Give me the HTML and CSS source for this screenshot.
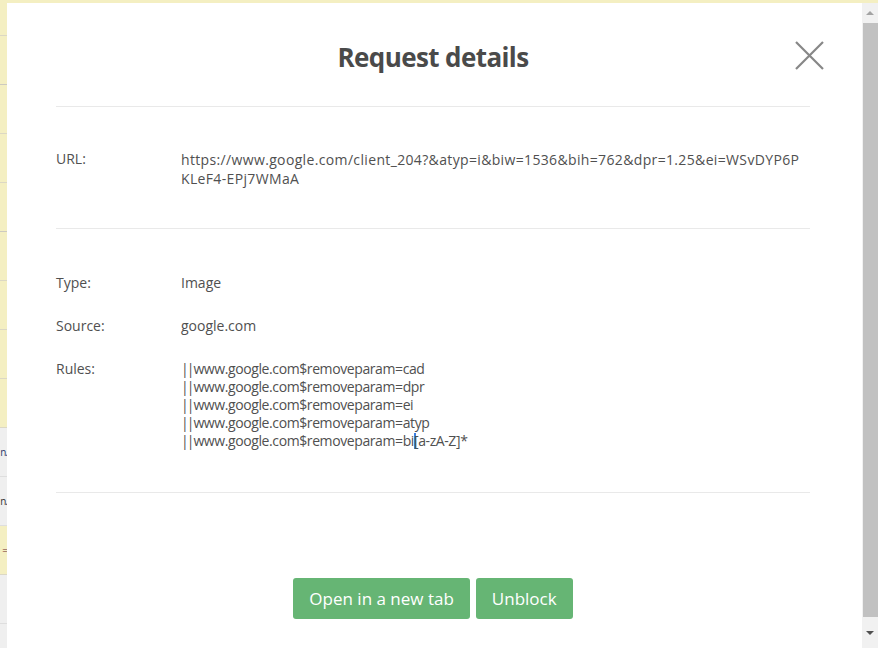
FILE: index.html
```html
<!DOCTYPE html>
<html lang="en">
<head>
  <meta charset="UTF-8" />
  <meta name="viewport" content="width=device-width, initial-scale=1.0" />
  <title>Request details</title>
  <link rel="stylesheet" href="styles.css">
</head>
<body>
  <div class="top-strip"></div>
  <div class="screen">
    <div class="behind">
      <div class="row yellow first"></div>
      <div class="row yellow dark"></div>
      <div class="row yellow"></div>
      <div class="row yellow"></div>
      <div class="row yellow dark"></div>
      <div class="row yellow"></div>
      <div class="row yellow"></div>
      <div class="row yellow"></div>
      <div class="row yellow"></div>
      <div class="row grey"><span class="tail blue">n.</span></div>
      <div class="row grey"><span class="tail">n.</span></div>
      <div class="row yellow"><span class="tail red">=</span></div>
      <div class="row grey"></div>
      <div class="row grey"></div>
    </div>

    <div class="modal">
      <div class="modal-header">
        <h2>Request details</h2>
        <button class="close" aria-label="Close">
          <svg width="29" height="29" viewBox="0 0 29 29">
            <path d="M1 1 L28 28 M28 1 L1 28" stroke="#878787" stroke-width="2.2" fill="none"/>
          </svg>
        </button>
      </div>

      <div class="section url-section">
        <div class="field">
          <div class="label">URL:</div>
          <div class="value url">https://www.google.com/client_204?&amp;atyp=i&amp;biw=1536&amp;bih=762&amp;dpr=1.25&amp;ei=WSvDYP6P<br>KLeF4-EPj7WMaA</div>
        </div>
      </div>

      <div class="section info-section">
        <div class="field">
          <div class="label">Type:</div>
          <div class="value">Image</div>
        </div>
        <div class="field">
          <div class="label">Source:</div>
          <div class="value">google.com</div>
        </div>
        <div class="field">
          <div class="label">Rules:</div>
          <div class="value rules">
            <div><span class="pipes">||</span>www.google.com$removeparam=cad</div>
            <div><span class="pipes">||</span>www.google.com$removeparam=dpr</div>
            <div><span class="pipes">||</span>www.google.com$removeparam=ei</div>
            <div><span class="pipes">||</span>www.google.com$removeparam=atyp</div>
            <div><span class="pipes">||</span>www.google.com$removeparam=bi<span class="caret"></span>[a-zA-Z]*</div>
          </div>
        </div>
      </div>

      <div class="actions">
        <button class="btn">Open in a new tab</button>
        <button class="btn">Unblock</button>
      </div>
    </div>

    <div class="scrollbar">
      <div class="arrow up"></div>
      <div class="thumb"></div>
      <div class="arrow down"></div>
    </div>
  </div>
</body>
</html>
```

FILE: styles.css
```css
html, body {
  margin: 0;
  height: 100%;
  overflow: hidden;
}
body {
  font-family: 'Open Sans', 'Noto Sans', Arial, sans-serif;
  background: #f4efc2;
}
.top-strip {
  height: 3px;
  background: #f4efc2;
}
.screen {
  display: flex;
  height: 645px;
}

/* page behind the dialog */
.behind {
  width: 7px;
  flex: none;
  overflow: hidden;
}
.row {
  height: 48px;
  border-bottom: 1px solid #dcd8c4;
  display: flex;
  align-items: center;
  justify-content: flex-end;
}
.row.first {
  height: 32px;
}
.row.dark {
  border-bottom-color: #cdcac0;
}
.row.yellow {
  background: #f4efc2;
}
.row.grey {
  background: #efefef;
  border-bottom-color: #dedede;
}
.tail {
  font-size: 10px;
  letter-spacing: -1px;
  white-space: nowrap;
  color: #333;
}
.tail.blue { color: #2a3a6a; }
.tail.red { color: #6a2a2a; }

/* dialog */
.modal {
  flex: 1;
  background: #fff;
  padding: 0 52px 0 49px;
  color: #505050;
  font-size: 14px;
}
.modal-header {
  display: flex;
  align-items: center;
  justify-content: center;
  position: relative;
  height: 103px;
  border-bottom: 1px solid #e9e9e9;
}
.modal-header h2 {
  margin: 4px 0 0;
  font-size: 26px;
  font-weight: 700;
  color: #4a4a4a;
  letter-spacing: -0.6px;
}
.close {
  position: absolute;
  right: -14px;
  top: 38px;
  padding: 0;
  border: none;
  background: none;
  cursor: pointer;
  line-height: 0;
}

.section {
  border-bottom: 1px solid #e9e9e9;
}
.url-section {
  padding: 43px 0 40px;
}
.info-section {
  padding: 45px 0 42px;
}
.field {
  display: flex;
  line-height: 18px;
}
.info-section .field + .field {
  margin-top: 25px;
}
.label {
  width: 125px;
  flex: none;
}
.value {
  flex: 1;
}
.url {
  line-height: 19px;
  letter-spacing: 0.35px;
  white-space: nowrap;
}
.rules {
  letter-spacing: -0.4px;
}
.pipes {
  letter-spacing: -2px;
  margin-right: 1px;
}
.caret {
  display: inline-block;
  width: 2px;
  height: 16px;
  background: #3b7fe0;
  vertical-align: -3px;
  margin-right: -2px;
}

.actions {
  display: flex;
  justify-content: center;
  gap: 6px;
  margin-top: 85px;
}
.btn {
  height: 41px;
  padding: 0 16px;
  border: none;
  border-radius: 3px;
  background: #66b574;
  color: #fff;
  font-family: inherit;
  font-size: 17px;
  cursor: pointer;
}

/* scrollbar */
.scrollbar {
  width: 16px;
  flex: none;
  background: #f1f1f1;
  display: flex;
  flex-direction: column;
  align-items: center;
}
.arrow {
  height: 20px;
  display: flex;
  align-items: center;
  justify-content: center;
}
.arrow.up::before {
  content: '';
  border: 4px solid transparent;
  border-bottom: 4px solid #a3a3a3;
  border-top: none;
}
.arrow.down {
  height: 31px;
}
.arrow.down::before {
  content: '';
  border: 4px solid transparent;
  border-top: 4px solid #505050;
  border-bottom: none;
}
.thumb {
  flex: 1;
  width: 15px;
  margin-left: 1px;
  background: #c1c1c1;
}
```
